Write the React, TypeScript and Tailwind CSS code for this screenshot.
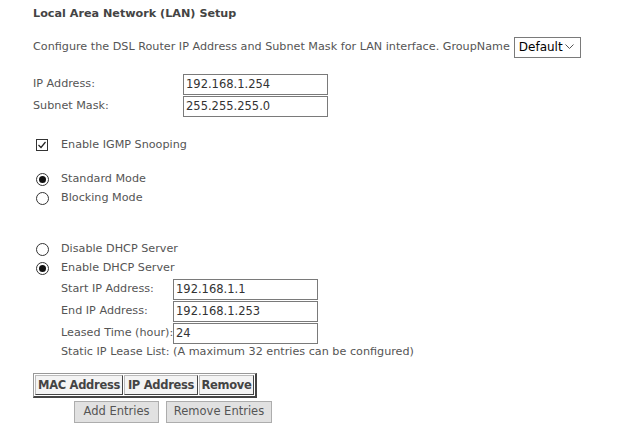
import React from 'react';

const font = "font-['Tahoma','DejaVu_Sans','Verdana',sans-serif]";

function Check() {
  return (
    <span className="inline-flex w-[12px] h-[12px] border border-[#333] bg-white items-center justify-center">
      <svg width="10" height="10" viewBox="0 0 10 10">
        <path d="M1.5 5 L4 7.5 L8.5 2" fill="none" stroke="#222" strokeWidth="1.2" />
      </svg>
    </span>
  );
}

function Radio({ on }: { on?: boolean }) {
  return (
    <span className="inline-flex w-[13px] h-[13px] rounded-full border border-[#333] bg-white items-center justify-center">
      {on && <span className="w-[7px] h-[7px] rounded-full bg-[#111]" />}
    </span>
  );
}

function Field({ value }: { value: string }) {
  return (
    <div className="w-[145px] shrink-0 h-[21px] border border-[#7a7a7a] bg-white px-[2px] text-[11.5px] leading-[19px] text-[#333]">
      {value}
    </div>
  );
}

export default function App() {
  return (
    <div className={`w-[639px] h-[431px] bg-white text-[#555] text-[11.2px] ${font} overflow-hidden`}>
      <div className="pl-[33px] pt-[4px]">
        <div className="font-bold text-[#444] h-[20px] leading-[20px]">Local Area Network (LAN) Setup</div>

        <div className="flex items-center mt-[13px] h-[20px]">
          <span className="whitespace-pre">Configure the DSL Router IP Address and Subnet Mask for LAN interface. GroupName</span>
          <div className="ml-[4px] flex items-center h-[21px] w-[67px] border border-[#7a7a7a] pl-[4px] pr-[6px] text-[12px] text-black justify-between">
            <span>Default</span>
            <svg width="9" height="6" viewBox="0 0 9 6">
              <path d="M0.5 0.5 L4.5 4.5 L8.5 0.5" fill="none" stroke="#555" strokeWidth="1" />
            </svg>
          </div>
        </div>

        <div className="mt-[17px] flex flex-col">
          <div className="flex items-center h-[21px]">
            <span className="w-[150px] shrink-0">IP Address:</span>
            <Field value="192.168.1.254" />
          </div>
          <div className="flex items-center h-[21px] mt-[1px]">
            <span className="w-[150px] shrink-0">Subnet Mask:</span>
            <Field value="255.255.255.0" />
          </div>
        </div>

        <div className="flex items-center mt-[19px] h-[18px] pl-[3px]">
          <Check />
          <span className="ml-[13px]">Enable IGMP Snooping</span>
        </div>

        <div className="mt-[16px] flex flex-col">
          <div className="flex items-center h-[19px] pl-[3px]">
            <Radio on />
            <span className="ml-[12px]">Standard Mode</span>
          </div>
          <div className="flex items-center h-[19px] pl-[3px]">
            <Radio />
            <span className="ml-[12px]">Blocking Mode</span>
          </div>
        </div>

        <div className="mt-[32px] flex flex-col">
          <div className="flex items-center h-[19px] pl-[3px]">
            <Radio />
            <span className="ml-[12px]">Disable DHCP Server</span>
          </div>
          <div className="flex items-center h-[19px] pl-[3px]">
            <Radio on />
            <span className="ml-[12px]">Enable DHCP Server</span>
          </div>
        </div>

        <div className="pl-[28px] flex flex-col">
          <div className="flex items-center h-[22px]">
            <span className="w-[112px] shrink-0 whitespace-nowrap">Start IP Address:</span>
            <Field value="192.168.1.1" />
          </div>
          <div className="flex items-center h-[22px]">
            <span className="w-[112px] shrink-0 whitespace-nowrap">End IP Address:</span>
            <Field value="192.168.1.253" />
          </div>
          <div className="flex items-center h-[22px]">
            <span className="w-[112px] shrink-0 whitespace-nowrap">Leased Time (hour):</span>
            <Field value="24" />
          </div>
          <div className="flex items-center h-[16px] whitespace-nowrap">
            Static IP Lease List: (A maximum 32 entries can be configured)
          </div>
        </div>

        <div className="mt-[13px] inline-flex border border-[#999] border-r-[#444] border-b-[#444] border-b-2 border-r-2 bg-white p-[1px] gap-[1px]">
          {[
            ['MAC Address', 'w-[88px]'],
            ['IP Address', 'w-[74px]'],
            ['Remove', 'w-[55px]'],
          ].map(([h, w]) => (
            <div key={h} className={`${w} h-[20px] leading-[18px] text-center whitespace-nowrap bg-[#f4f4f4] border border-[#444] border-t-[#bbb] border-l-[#bbb] font-bold text-[11.5px] tracking-[-0.3px] text-[#444]`}>
              {h}
            </div>
          ))}
        </div>

        <div className="flex gap-[7px] pl-[41px] mt-[3px]">
          <button className="h-[22px] w-[85px] bg-[#e1e1e1] border border-[#adadad] text-[#555] text-[11.5px]">Add Entries</button>
          <button className="h-[22px] w-[106px] bg-[#e1e1e1] border border-[#adadad] text-[#555] text-[11.5px]">Remove Entries</button>
        </div>
      </div>
    </div>
  );
}
